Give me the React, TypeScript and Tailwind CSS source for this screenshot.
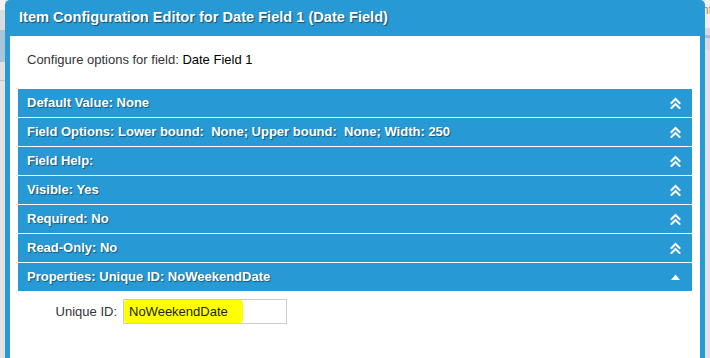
import { ReactNode } from "react";

/* ---------- Local types ---------- */

type Section = {
  id: string;
  label: string;
  open?: boolean;
};

const SECTIONS: Section[] = [
  { id: "default", label: "Default Value: None" },
  {
    id: "options",
    label: "Field Options: Lower bound:\u00a0 None; Upper bound:\u00a0 None; Width: 250",
  },
  { id: "help", label: "Field Help:" },
  { id: "visible", label: "Visible: Yes" },
  { id: "required", label: "Required: No" },
  { id: "readonly", label: "Read-Only: No" },
  { id: "props", label: "Properties: Unique ID: NoWeekendDate", open: true },
];

/* ---------- Icons ---------- */

function AnglesUp() {
  return (
    <svg width="11" height="12" viewBox="0 0 11 12" fill="none">
      <path
        d="M1.5 6 L5.5 2 L9.5 6"
        stroke="white"
        strokeWidth="2"
        strokeLinecap="square"
      />
      <path
        d="M1.5 11 L5.5 7 L9.5 11"
        stroke="white"
        strokeWidth="2"
        strokeLinecap="square"
      />
    </svg>
  );
}

function CaretUp() {
  return (
    <svg width="9" height="6" viewBox="0 0 9 6">
      <path d="M0 6 L4.5 0.5 L9 6 Z" fill="white" />
    </svg>
  );
}

/* ---------- Pieces ---------- */

function AccordionRow({ section }: { section: Section }) {
  return (
    <div className="flex h-[28px] items-center justify-between bg-[#279ad6] pl-[9px] pr-[11px] text-[13px] font-bold text-white [text-shadow:1px_1px_1px_rgba(0,0,0,0.45)]">
      <span className="whitespace-pre">{section.label}</span>
      <span className="flex w-[12px] justify-center">
        {section.open ? <CaretUp /> : <AnglesUp />}
      </span>
    </div>
  );
}

function Strip({ children }: { children: ReactNode }) {
  return <div className="flex w-[5px] shrink-0 flex-col">{children}</div>;
}

/* ------------------------------------------------------------------ */

export default function App() {
  return (
    <div className="flex h-[358px] w-[710px] overflow-hidden bg-[#e3e3e3] font-['Liberation_Sans',Arial,sans-serif]">
      {/* page behind, left edge */}
      <Strip>
        <div className="h-[10px] bg-[#f3f3f3]" />
        <div className="h-[20px] bg-[#dcdcdc]" />
        <div className="h-[32px] bg-[#a9c5d9]" />
        <div className="h-[18px] bg-[#e2e2e2]" />
        <div className="h-px bg-[#c4c4c4]" />
        <div className="flex-1 bg-[#e3e3e3]" />
      </Strip>

      {/* dialog */}
      <div className="flex w-[700px] shrink-0 flex-col rounded-t-[5px] bg-[#279ad6]">
        <div className="flex h-[36px] items-center pl-[14px] text-[14.6px] font-bold text-white [text-shadow:1px_1px_1px_rgba(0,0,0,0.5)]">
          Item Configuration Editor for Date Field 1 (Date Field)
        </div>

        <div className="mx-[5px] flex-1 bg-white px-[8px] pt-[16px]">
          <p className="pl-[9px] text-[13px] leading-[16px] text-[#333]">
            Configure options for field:{" "}
            <span className="text-black">Date Field 1</span>
          </p>

          <div className="mt-[21px] flex flex-col gap-px">
            {SECTIONS.map((s) => (
              <AccordionRow key={s.id} section={s} />
            ))}
          </div>

          <div className="mt-[8px] flex items-center">
            <label className="w-[99px] text-right text-[13px] text-[#333]">
              Unique ID:
            </label>
            <div className="ml-[6px] flex h-[25px] w-[164px] items-center border border-[#cccccc] bg-white">
              <span className="flex h-[23px] items-center rounded-[3px] bg-[#ffff00] pl-[5px] pr-[15px] text-[13px] text-[#222]">
                NoWeekendDate
              </span>
            </div>
          </div>
        </div>
      </div>

      {/* page behind, right edge */}
      <Strip>
        <div className="h-[28px] overflow-hidden bg-[#f2f2f2] text-[12px] leading-[20px] text-[#b07a60]">
          <span className="-ml-[3px]">nt</span>
        </div>
        <div className="h-[7px] bg-[#dadada]" />
        <div className="h-[3px] bg-[#9cc4d8]" />
        <div className="h-[12px] bg-[#dadada]" />
        <div className="flex-1 bg-[#e3e3e3]" />
      </Strip>
    </div>
  );
}
